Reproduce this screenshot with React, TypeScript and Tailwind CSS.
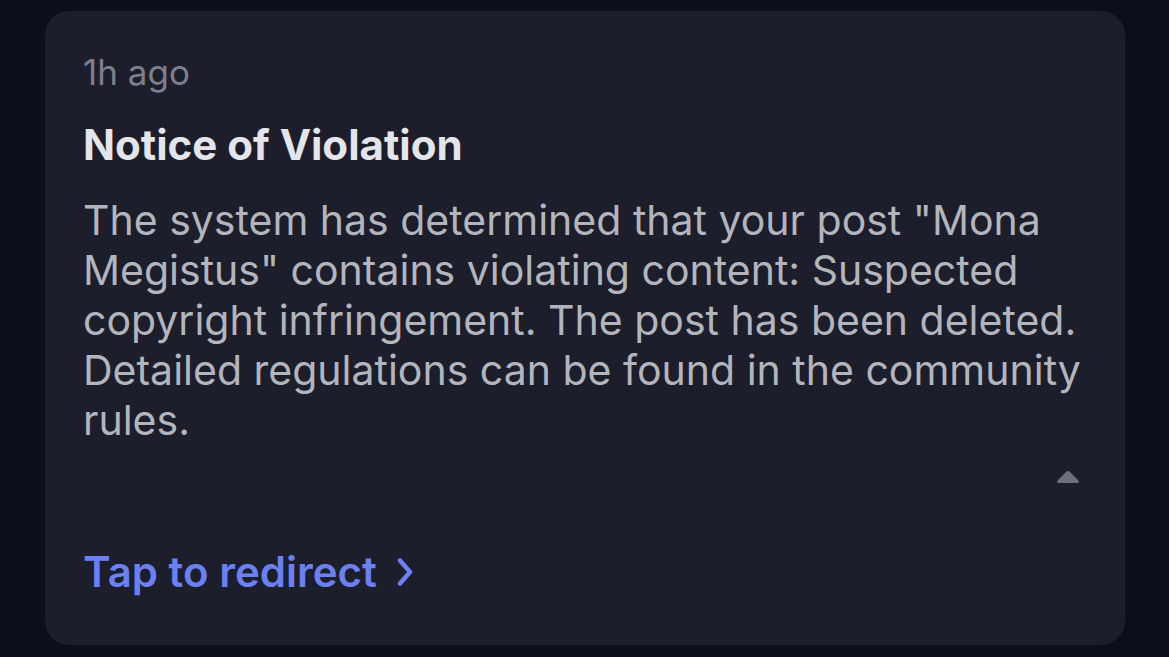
import React from "react";

export default function App() {
  return (
    <div
      className="w-[1169px] h-[657px] bg-[#0b0e1b] pt-[11px] pl-[45px] pr-[44px] pb-[12px]"
      style={{ fontFamily: "Inter, 'Noto Sans', sans-serif" }}
    >
      <div className="h-full rounded-[24px] bg-[#1c1e2b] pl-[38px] pr-[40px] flex flex-col">
        <div className="pt-[41px] text-[35px] leading-[40px] text-[#7d808b]">1h ago</div>
        <div className="mt-[30px] text-[42px] leading-[46px] font-bold text-[#e4e5ea]">
          Notice of Violation
        </div>
        <div className="mt-[27px] text-[41px] leading-[50px] text-[#b3b5bd]">
          The system has determined that your post "Mona Megistus" contains violating content:
          Suspected copyright infringement. The post has been deleted. Detailed regulations can be
          found in the community rules.
        </div>
        <div className="flex justify-end mt-[24px] pr-[5px]">
          <svg width="24" height="16" viewBox="0 0 24 16">
            <path d="M12 2 Q13 2 14 3 L22 11 Q24 14 21 14 L3 14 Q0 14 2 11 L10 3 Q11 2 12 2 Z" fill="#6d6f79" />
          </svg>
        </div>
        <div className="mt-[62px] flex items-center gap-[20px] text-[42px] leading-[50px] font-semibold text-[#6b80f2]">
          <span>Tap to redirect</span>
          <svg width="16" height="30" viewBox="0 0 16 30" fill="none">
            <path d="M3 3.5 L13 15 L3 26.5" stroke="#6b80f2" strokeWidth="4.5" strokeLinecap="round" strokeLinejoin="round" />
          </svg>
        </div>
      </div>
    </div>
  );
}
